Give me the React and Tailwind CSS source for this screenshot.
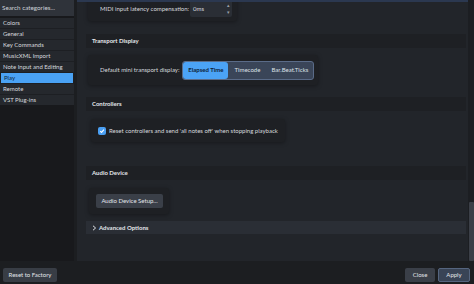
import { useState } from 'react'

const categories = [
  'Colors',
  'General',
  'Key Commands',
  'MusicXML Import',
  'Note Input and Editing',
  'Play',
  'Remote',
  'VST Plug-ins',
]

const modes = ['Elapsed Time', 'Timecode', 'Bar.Beat.Ticks']

function SectionHeader({ title, className = '' }) {
  return (
    <div className={`h-[14px] bg-[#1e2024] flex items-center pl-[6px] font-bold text-[#e4e6ea] ${className}`}>
      {title}
    </div>
  )
}

export default function App() {
  const [selected, setSelected] = useState('Play')
  const [mode, setMode] = useState('Elapsed Time')
  const [reset, setReset] = useState(true)

  return (
    <div
      className="w-[474px] h-[284px] flex flex-col overflow-hidden bg-[#1c1e21] text-[6px] leading-none whitespace-nowrap text-[#d6d9de]"
      style={{ fontFamily: 'Lato, "Liberation Sans", sans-serif' }}
    >
      <div className="flex flex-1 min-h-0">
        {/* sidebar */}
        <aside className="w-[74px] flex flex-col bg-[#18191c]">
          <div className="h-[16px] bg-[#2f333a] flex items-center pl-[2px] text-[6.3px] text-[#cdd1d7]">
            Search categories...
          </div>
          <div className="mt-[2px] flex flex-col bg-[#1d1f23] gap-px">
            {categories.map((c) => (
              <button
                key={c}
                onClick={() => setSelected(c)}
                className={`h-[10px] flex items-center pl-[3px] text-left ${
                  selected === c ? 'bg-[#4aa2f4] text-[#0f2238] mx-px' : 'bg-[#25282d]'
                }`}
              >
                {c}
              </button>
            ))}
          </div>
        </aside>

        {/* main panel */}
        <main className="ml-[3px] flex-1 flex bg-[#22252a]">
          <div className="flex-1 overflow-hidden border-t-2 border-[#2b3850] pl-[9px] pr-[2px]">
            <div className="-mt-[6px] ml-[2px] w-[149px] bg-[#1e2024] shadow-[0_1px_4px_rgba(0,0,0,0.35)] flex items-center pl-[12px] pt-[4px] pb-[4px] rounded-[3px]">
              <span>MIDI input latency compensation:</span>
              <div className="ml-auto mr-[5px] w-[42px] h-[17px] bg-[#2a2e35] rounded-[2px] flex items-center pl-[3px]">
                <span className="mt-[1px]">0ms</span>
                <div className="ml-auto mr-[2px] flex flex-col items-center text-[5px] text-[#9aa0a8] leading-[7px]">
                  <span>▴</span>
                  <span>▾</span>
                </div>
              </div>
            </div>

            <SectionHeader title="Transport Display" className="mt-[13px]" />
            <div className="mt-[7px] ml-[2px] w-[230px] h-[30px] bg-[#1e2024] shadow-[0_1px_4px_rgba(0,0,0,0.35)] rounded-[3px] flex items-center pl-[12px]">
              <span>Default mini transport display:</span>
              <div className="ml-[3px] h-[19px] flex items-stretch bg-[#3a4558] border border-[#5a6b88] rounded-[3px]">
                {modes.map((m) => (
                  <button
                    key={m}
                    onClick={() => setMode(m)}
                    className={`flex items-center justify-center ${
                      m === 'Elapsed Time'
                        ? 'w-[45px]'
                        : m === 'Timecode'
                        ? 'w-[38px]'
                        : 'w-[47px]'
                    } ${mode === m ? 'bg-[#4ba3f6] text-[#0e2136] rounded-[3px] font-bold' : 'text-[#dde1e7]'}`}
                  >
                    {m}
                  </button>
                ))}
              </div>
            </div>

            <SectionHeader title="Controllers" className="mt-[12px]" />
            <div className="mt-[8px] ml-[5px] w-[194px] h-[23px] bg-[#1e2024] shadow-[0_1px_4px_rgba(0,0,0,0.35)] rounded-[3px] flex items-center pl-[7px]">
              <button
                onClick={() => setReset(!reset)}
                className={`w-[8px] h-[8px] rounded-[2px] flex items-center justify-center ${
                  reset ? 'bg-[#4a9ff3]' : 'bg-[#2a2e35] border border-[#555]'
                }`}
              >
                {reset && (
                  <svg width="6" height="6" viewBox="0 0 10 10">
                    <path d="M2 5.2 L4.2 7.4 L8.2 2.6" fill="none" stroke="#fff" strokeWidth="1.8" />
                  </svg>
                )}
              </button>
              <span className="ml-[3px]">Reset controllers and send 'all notes off' when stopping playback</span>
            </div>

            <SectionHeader title="Audio Device" className="mt-[24px]" />
            <div className="mt-[8px] ml-[3px] w-[80px] h-[26px] bg-[#1e2024] shadow-[0_1px_4px_rgba(0,0,0,0.35)] rounded-[3px] flex items-center pl-[7px]">
              <button className="w-[67px] h-[14px] bg-[#3a3f48] rounded-[2px] text-[#e2e5ea]">
                Audio Device Setup...
              </button>
            </div>

            <div className="mt-[7px] h-[13px] bg-[#2a2e35] flex items-center pl-[6px] text-[#e2e5ea] font-bold">
              <svg width="5" height="6" viewBox="0 0 5 6">
                <path d="M1 0.8 L3.6 3 L1 5.2" fill="none" stroke="#dfe2e6" strokeWidth="1" />
              </svg>
              <span className="ml-[2px]">Advanced Options</span>
            </div>
          </div>

          {/* scrollbar */}
          <div className="w-[6px] bg-[#1c1e22] flex flex-col">
            <div className="mt-[202px] h-[59px] ml-px bg-[#3b3f47] rounded-[1px]" />
          </div>
        </main>
      </div>

      {/* bottom bar */}
      <footer className="h-[23px] flex items-end pb-[2px] pl-[3px] pr-[4px]">
        <button className="w-[54px] h-[14px] bg-[#383d45] rounded-[2px] text-[#e2e5ea]">
          Reset to Factory
        </button>
        <button className="ml-auto w-[30px] h-[14px] bg-[#3a3f48] rounded-[2px] text-[#e2e5ea]">
          Close
        </button>
        <button className="ml-[3px] w-[32px] h-[14px] bg-[#394456] border border-[#55657f] rounded-[2px] text-[#e2e5ea]">
          Apply
        </button>
      </footer>
    </div>
  )
}
